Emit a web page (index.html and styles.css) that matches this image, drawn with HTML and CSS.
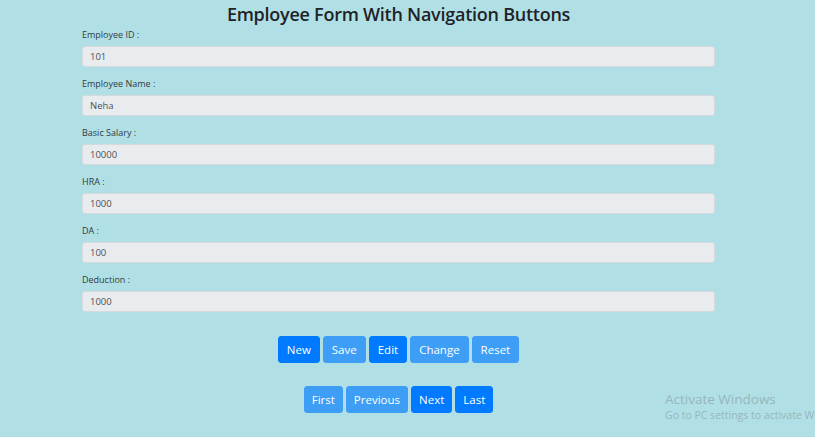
FILE: index.html
```html
<!DOCTYPE html>
<html lang="en">
<head>
<meta charset="utf-8">
<title>Employee Form</title>
<link rel="stylesheet" href="styles.css">
</head>
<body>
<div class="page">
  <h1 class="title">Employee Form With Navigation Buttons</h1>
  <form class="form">
    <div class="field">
      <label class="label">Employee ID :</label>
      <input class="input" type="text" value="101" readonly>
    </div>
    <div class="field">
      <label class="label">Employee Name :</label>
      <input class="input" type="text" value="Neha" readonly>
    </div>
    <div class="field">
      <label class="label">Basic Salary :</label>
      <input class="input" type="text" value="10000" readonly>
    </div>
    <div class="field">
      <label class="label">HRA :</label>
      <input class="input" type="text" value="1000" readonly>
    </div>
    <div class="field">
      <label class="label">DA :</label>
      <input class="input" type="text" value="100" readonly>
    </div>
    <div class="field">
      <label class="label">Deduction :</label>
      <input class="input" type="text" value="1000" readonly>
    </div>
    <div class="btn-row first-row">
      <button type="button" class="btn">New</button>
      <button type="button" class="btn disabled">Save</button>
      <button type="button" class="btn">Edit</button>
      <button type="button" class="btn disabled">Change</button>
      <button type="button" class="btn disabled">Reset</button>
    </div>
    <div class="btn-row nav-row">
      <button type="button" class="btn disabled">First</button>
      <button type="button" class="btn disabled">Previous</button>
      <button type="button" class="btn">Next</button>
      <button type="button" class="btn">Last</button>
    </div>
  </form>
</div>
<div class="watermark">
  <div class="wm-title">Activate Windows</div>
  <div class="wm-sub">Go to PC settings to activate Windows.</div>
</div>
</body>
</html>
```

FILE: styles.css
```css
html, body {
  margin: 0;
  padding: 0;
  height: 100%;
  overflow: hidden;
}
body {
  background: #b0e0e6;
  font-family: "Open Sans", "Noto Sans", sans-serif;
  color: #212529;
  position: relative;
}
.page {
  box-sizing: border-box;
  width: 798px;
  padding: 0 83px 0 82px;
}
.title {
  margin: 0;
  height: 29px;
  line-height: 28px;
  font-size: 18px;
  font-weight: 600;
  letter-spacing: -0.25px;
  text-align: center;
  color: #1f2326;
}
.form {
  display: flex;
  flex-direction: column;
}
.field {
  display: flex;
  flex-direction: column;
  margin-bottom: 11px;
}
.label {
  font-size: 9px;
  line-height: 12px;
  height: 12px;
  color: #343a40;
  margin-bottom: 5px;
}
.input {
  box-sizing: border-box;
  height: 21px;
  width: 100%;
  margin: 0;
  padding: 0 7px;
  font-family: inherit;
  font-size: 9.5px;
  color: #495057;
  background: #e9ecef;
  border: 1px solid #d6dadd;
  border-radius: 3px;
  outline: none;
}
.btn-row {
  display: flex;
  justify-content: center;
  gap: 3px;
  margin-top: 23px;
}
.first-row {
  margin-top: 13px;
}
.nav-row .btn {
  padding: 0 7px;
}
.btn {
  height: 27px;
  padding: 0 8px;
  font-family: inherit;
  font-size: 11.5px;
  color: #fff;
  background: #007bff;
  border: 1px solid #007bff;
  border-radius: 3px;
  cursor: pointer;
}
.btn.disabled {
  background: #3e9ef6;
  border-color: #3e9ef6;
}
.watermark {
  position: absolute;
  left: 665px;
  top: 390px;
  white-space: nowrap;
  color: #95b6bb;
  font-family: "Open Sans", "Noto Sans", sans-serif;
}
.wm-title {
  font-size: 13.5px;
  line-height: 18px;
}
.wm-sub {
  font-size: 10.5px;
  line-height: 15px;
}
```
